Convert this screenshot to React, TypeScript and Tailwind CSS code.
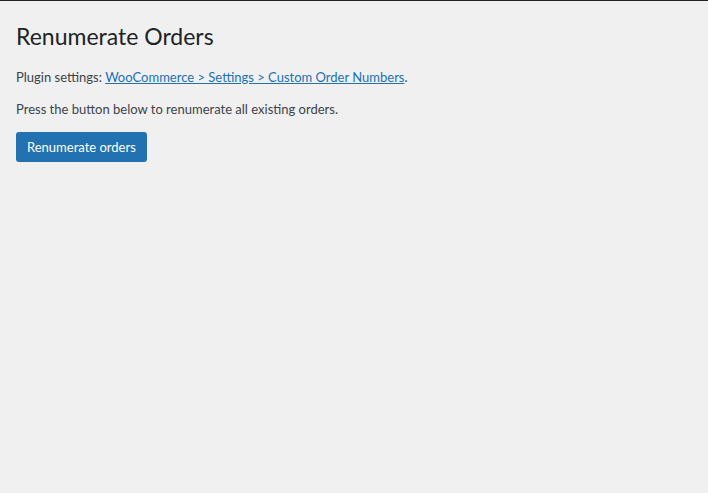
export default function App() {
  return (
    <div className="min-h-[493px] w-full bg-[#f0f0f1] text-[#3c434a] border-t border-[#1d2327]" style={{ fontFamily: 'Lato, "Noto Sans", sans-serif' }}>
      <div className="px-4 pt-[21px]">
        <h1 className="text-[23px] leading-[29px] font-normal text-[#1d2327]">Renumerate Orders</h1>
        <p className="mt-[17px] text-[13px] leading-[19px]">
          Plugin settings:{" "}
          <a href="#" className="text-[#2271b1] underline">WooCommerce &gt; Settings &gt; Custom Order Numbers</a>.
        </p>
        <p className="mt-[13px] text-[13px] leading-[19px]">Press the button below to renumerate all existing orders.</p>
        <button className="mt-[13px] h-[30px] px-[11px] rounded-[3px] bg-[#2271b1] text-white text-[13px] leading-[28px]">
          Renumerate orders
        </button>
      </div>
    </div>
  );
}
